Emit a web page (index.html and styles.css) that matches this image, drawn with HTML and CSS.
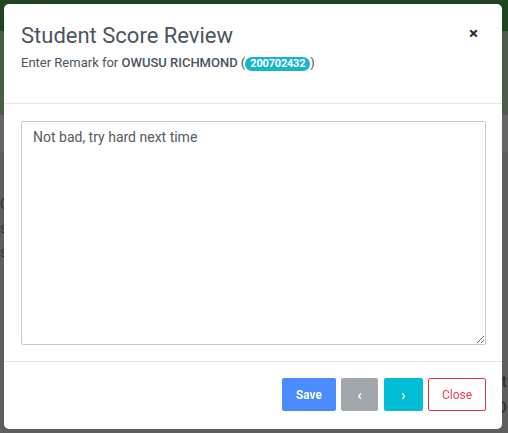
FILE: index.html
```html
<!DOCTYPE html>
<html>
<head>
<meta charset="utf-8">
<link rel="stylesheet" href="styles.css">
</head>
<body>
<div class="page">
  <div class="band-top"></div>
  <div class="band-mid"></div>
  <div class="band-grey"></div>
  <div class="page-body">
    <div class="left-text">
      <span>Overall</span>
      <span>scores</span>
      <span>status</span>
    </div>
    <div class="right-table">
      <div class="rt-row">Test</div>
      <div class="rt-row">OD</div>
    </div>
  </div>
</div>
<div class="modal">
  <div class="modal-header">
    <div class="titles">
      <h1 class="title">Student Score Review</h1>
      <p class="subtitle">Enter Remark for <b>OWUSU RICHMOND</b> (<span class="badge">200702432</span>)</p>
    </div>
    <span class="close-x">&times;</span>
  </div>
  <div class="modal-body">
    <textarea class="remark">Not bad, try hard next time</textarea>
  </div>
  <div class="modal-footer">
    <button class="btn btn-save">Save</button>
    <button class="btn btn-prev">&lsaquo;</button>
    <button class="btn btn-next">&rsaquo;</button>
    <button class="btn btn-close">Close</button>
  </div>
</div>
</body>
</html>
```
FILE: styles.css
```css
html, body {
  margin: 0;
  padding: 0;
  height: 100%;
  overflow: hidden;
}
body {
  background: #5e5e5e;
  font-family: Roboto, "Liberation Sans", sans-serif;
}
.page {
  display: flex;
  flex-direction: column;
}
.band-top {
  height: 31px;
  background: #1f4422;
}
.band-mid {
  height: 84px;
  background: #4b5c4b;
}
.band-grey {
  height: 37px;
  background: #666666;
}
.page-body {
  position: relative;
  height: 281px;
}
.left-text {
  display: flex;
  flex-direction: column;
  align-items: flex-start;
  gap: 8px;
  padding-top: 44px;
  font-size: 14px;
  color: #2a3340;
}
.right-table {
  position: absolute;
  left: 440px;
  top: 216px;
  width: 67px;
  text-align: right;
}
.rt-row {
  height: 25px;
  border-top: 1px solid #555;
  font-size: 17px;
  line-height: 25px;
  color: #2a2a2a;
}
.modal {
  position: fixed;
  left: 4px;
  top: 4px;
  width: 498px;
  height: 425px;
  background: #fff;
  border-radius: 5px;
  display: flex;
  flex-direction: column;
}
.modal-header {
  display: flex;
  justify-content: space-between;
  align-items: flex-start;
  padding: 17px 24px 0 17px;
  height: 82px;
  border-bottom: 1px solid #e3e6ea;
}
.title {
  margin: 0;
  font-size: 22px;
  font-weight: 400;
  line-height: 30px;
  color: #4a5561;
}
.subtitle {
  margin: 2px 0 0;
  font-size: 13px;
  line-height: 20px;
  color: #4a5561;
}
.subtitle b {
  font-weight: 500;
}
.badge {
  display: inline-block;
  background: #17b5cf;
  color: #fff;
  font-weight: 700;
  font-size: 11px;
  line-height: 14px;
  padding: 0 5px;
  border-radius: 7px;
  letter-spacing: -0.2px;
}
.close-x {
  font-size: 17px;
  font-weight: 700;
  color: #2a2a2a;
  line-height: 20px;
  margin-top: 2px;
}
.modal-body {
  padding: 17px 16px 16px 17px;
  border-bottom: 1px solid #e3e6ea;
}
.remark {
  display: block;
  box-sizing: border-box;
  width: 465px;
  height: 224px;
  border: 1px solid #c8c8c8;
  border-radius: 2px;
  padding: 5px 11px;
  font-family: Roboto, "Liberation Sans", sans-serif;
  font-size: 14px;
  line-height: 20px;
  color: #555b62;
  resize: vertical;
  outline: none;
}
.modal-footer {
  display: flex;
  justify-content: flex-end;
  padding: 16px 16px 0;
  gap: 5px;
}
.btn {
  height: 33px;
  border-radius: 2px;
  border: 1px solid transparent;
  font-family: Roboto, "Liberation Sans", sans-serif;
  font-size: 12px;
  color: #fff;
  padding: 0;
}
.btn-save {
  width: 54px;
  background: #4a8cff;
  font-weight: 700;
}
.btn-prev {
  width: 37px;
  background: #a2a6ad;
  font-size: 15px;
  font-weight: 700;
}
.btn-next {
  width: 39px;
  background: #00bcd4;
  font-size: 15px;
  font-weight: 700;
  margin-left: 1px;
}
.btn-close {
  width: 58px;
  background: #fff;
  border-color: #e0354a;
  color: #ef3c4f;
}
```
